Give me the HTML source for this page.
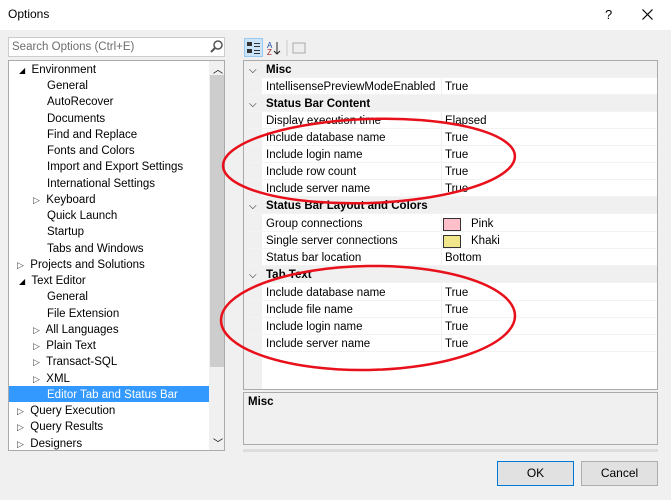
<!DOCTYPE html>
<html><head><style>
*{margin:0;padding:0;box-sizing:border-box}
body{width:671px;height:500px;background:#f0f0f0;font-family:"Liberation Sans",sans-serif;font-size:11.5px;color:#000;position:relative;overflow:hidden}
.a{position:absolute;white-space:nowrap}
#title{left:0;top:0;width:671px;height:30px;background:#fff}
#search{left:8px;top:37px;width:217px;height:20px;background:#fff;border:1px solid #ccc}
#tree{left:8px;top:60px;width:217px;height:391px;background:#fff;border:1px solid #aaa;overflow:hidden}
.ti{position:absolute;height:16px;line-height:18px}
.sb{position:absolute;left:200px;top:0;width:16px;height:389px;background:#f0f0f0}
#grid{left:243px;top:60px;width:415px;height:330px;background:#fff;border:1px solid #aaa}
.r{position:absolute;left:0;width:413px;height:17px;line-height:19px;border-bottom:1px solid #f3f3f3}
.cat{background:#f0f0f0;font-weight:bold}
.gut{position:absolute;left:0;top:0;width:18px;height:328px;background:#f0f0f0}
.btn{position:absolute;height:25px;background:#e1e1e1;border:1px solid #adadad;text-align:center;line-height:23px;font-size:12px}
</style></head><body>
<div id="title" class="a"><span class="a" style="left:8px;top:7px;font-size:12px">Options</span>
<span class="a" style="left:605px;top:7px;font-size:13px">?</span>
<svg class="a" style="left:642px;top:9px" width="11" height="11"><path d="M0.5 0.5L10.5 10.5M10.5 0.5L0.5 10.5" stroke="#000" stroke-width="1.2"/></svg></div>
<div id="search" class="a"><span class="a" style="left:3px;top:3px;color:#6d6d6d">Search Options (Ctrl+E)</span>
<svg class="a" style="left:201px;top:2px" width="13" height="14"><circle cx="8" cy="5" r="4" fill="none" stroke="#555" stroke-width="1.5"/><line x1="5" y1="8" x2="1" y2="12" stroke="#555" stroke-width="2"/></svg></div>
<div id="tree" class="a">
<div class="sb"><div style="position:absolute;left:1px;top:14px;width:14px;height:292px;background:#cdcdcd"></div>
<span class="a" style="left:4px;top:0;font-size:10px">︿</span><span class="a" style="left:4px;top:374px;font-size:10px">﹀</span></div>
<div class="ti" style="left:0;width:200px;background:#3399ff;top:325px"></div>
<div class="ti" style="top:0;left:10px"><span style="font-size:8px">◢</span>&nbsp; Environment</div>
<div class="ti" style="top:16px;left:38px">General</div>
<div class="ti" style="top:32px;left:38px">AutoRecover</div>
<div class="ti" style="top:49px;left:38px">Documents</div>
<div class="ti" style="top:65px;left:38px">Find and Replace</div>
<div class="ti" style="top:81px;left:38px">Fonts and Colors</div>
<div class="ti" style="top:97px;left:38px">Import and Export Settings</div>
<div class="ti" style="top:114px;left:38px">International Settings</div>
<div class="ti" style="top:130px;left:24px"><span style="font-size:9px;color:#444">▷</span>&nbsp; Keyboard</div>
<div class="ti" style="top:146px;left:38px">Quick Launch</div>
<div class="ti" style="top:162px;left:38px">Startup</div>
<div class="ti" style="top:179px;left:38px">Tabs and Windows</div>
<div class="ti" style="top:195px;left:8px"><span style="font-size:9px;color:#444">▷</span>&nbsp; Projects and Solutions</div>
<div class="ti" style="top:211px;left:10px"><span style="font-size:8px">◢</span>&nbsp; Text Editor</div>
<div class="ti" style="top:227px;left:38px">General</div>
<div class="ti" style="top:244px;left:38px">File Extension</div>
<div class="ti" style="top:260px;left:24px"><span style="font-size:9px;color:#444">▷</span>&nbsp; All Languages</div>
<div class="ti" style="top:276px;left:24px"><span style="font-size:9px;color:#444">▷</span>&nbsp; Plain Text</div>
<div class="ti" style="top:292px;left:24px"><span style="font-size:9px;color:#444">▷</span>&nbsp; Transact-SQL</div>
<div class="ti" style="top:309px;left:24px"><span style="font-size:9px;color:#444">▷</span>&nbsp; XML</div>
<div class="ti" style="top:325px;left:38px;color:#fff">Editor Tab and Status Bar</div>
<div class="ti" style="top:341px;left:8px"><span style="font-size:9px;color:#444">▷</span>&nbsp; Query Execution</div>
<div class="ti" style="top:357px;left:8px"><span style="font-size:9px;color:#444">▷</span>&nbsp; Query Results</div>
<div class="ti" style="top:374px;left:8px"><span style="font-size:9px;color:#444">▷</span>&nbsp; Designers</div>
</div>
<div class="a" style="left:244px;top:38px;width:19px;height:19px;background:#cce4f7;border:1px solid #99c9ef"></div>
<svg class="a" style="left:246px;top:40px" width="60" height="16"><g fill="#333"><rect x="1" y="2" width="5" height="4"/><rect x="1" y="9" width="5" height="4"/><rect x="8" y="3" width="6" height="1"/><rect x="8" y="6" width="6" height="1"/><rect x="8" y="10" width="6" height="1"/><rect x="8" y="13" width="6" height="1"/></g>
<text x="21" y="8" font-size="8" fill="#1a4fa0" font-family="Liberation Sans">A</text><text x="21" y="15" font-size="8" fill="#a02020" font-family="Liberation Sans">Z</text><line x1="31" y1="2" x2="31" y2="14" stroke="#222"/><path d="M28 11 L31 14 L34 11" fill="none" stroke="#222"/>
<line x1="41" y1="0" x2="41" y2="16" stroke="#ccc"/><rect x="47" y="3" width="12" height="10" fill="#eee" stroke="#aaa"/></svg>
<div id="grid" class="a"><div class="gut"></div>
<div class="r cat" style="top:0"><span class="a" style="left:5px;font-weight:normal;font-size:10px">⌵</span><span class="a" style="left:22px">Misc</span></div>
<div class="r" style="top:17px"><span class="a" style="left:22px">IntellisensePreviewModeEnabled</span><span class="a" style="left:201px">True</span></div>
<div class="r cat" style="top:34px"><span class="a" style="left:5px;font-weight:normal;font-size:10px">⌵</span><span class="a" style="left:22px">Status Bar Content</span></div>
<div class="r" style="top:51px"><span class="a" style="left:22px">Display execution time</span><span class="a" style="left:201px">Elapsed</span></div>
<div class="r" style="top:68px"><span class="a" style="left:22px">Include database name</span><span class="a" style="left:201px">True</span></div>
<div class="r" style="top:85px"><span class="a" style="left:22px">Include login name</span><span class="a" style="left:201px">True</span></div>
<div class="r" style="top:102px"><span class="a" style="left:22px">Include row count</span><span class="a" style="left:201px">True</span></div>
<div class="r" style="top:119px"><span class="a" style="left:22px">Include server name</span><span class="a" style="left:201px">True</span></div>
<div class="r cat" style="top:136px"><span class="a" style="left:5px;font-weight:normal;font-size:10px">⌵</span><span class="a" style="left:22px">Status Bar Layout and Colors</span></div>
<div class="r" style="top:154px"><span class="a" style="left:22px">Group connections</span><span class="a" style="left:199px;top:3px;width:18px;height:13px;background:#ffc0cb;border:1px solid #333"></span><span class="a" style="left:227px">Pink</span></div>
<div class="r" style="top:171px"><span class="a" style="left:22px">Single server connections</span><span class="a" style="left:199px;top:3px;width:18px;height:13px;background:#f0e68c;border:1px solid #333"></span><span class="a" style="left:227px">Khaki</span></div>
<div class="r" style="top:188px"><span class="a" style="left:22px">Status bar location</span><span class="a" style="left:201px">Bottom</span></div>
<div class="r cat" style="top:205px"><span class="a" style="left:5px;font-weight:normal;font-size:10px">⌵</span><span class="a" style="left:22px">Tab Text</span></div>
<div class="r" style="top:223px"><span class="a" style="left:22px">Include database name</span><span class="a" style="left:201px">True</span></div>
<div class="r" style="top:240px"><span class="a" style="left:22px">Include file name</span><span class="a" style="left:201px">True</span></div>
<div class="r" style="top:257px"><span class="a" style="left:22px">Include login name</span><span class="a" style="left:201px">True</span></div>
<div class="r" style="top:274px"><span class="a" style="left:22px">Include server name</span><span class="a" style="left:201px">True</span></div>
<div class="a" style="left:197px;top:0;width:1px;height:290px;background:#f0f0f0"></div>
</div>
<div class="a" style="left:243px;top:392px;width:415px;height:53px;border:1px solid #aaa;background:#f0f0f0"><span class="a" style="left:4px;top:3px;font-weight:bold">Misc</span></div>
<div class="a" style="left:243px;top:449px;width:415px;height:3px;background:#ddd"></div>
<div class="btn" style="left:497px;top:461px;width:77px;border:1px solid #0078d7">OK</div>
<div class="btn" style="left:581px;top:461px;width:77px">Cancel</div>
<svg class="a" style="left:0;top:0" width="671" height="500"><g fill="none" stroke="#e8101a" stroke-width="2.5">
<ellipse cx="369" cy="161" rx="146" ry="42" transform="rotate(-2 369 161)"/>
<ellipse cx="368" cy="318" rx="147" ry="52" transform="rotate(-1 368 318)"/></g></svg>
</body></html>
